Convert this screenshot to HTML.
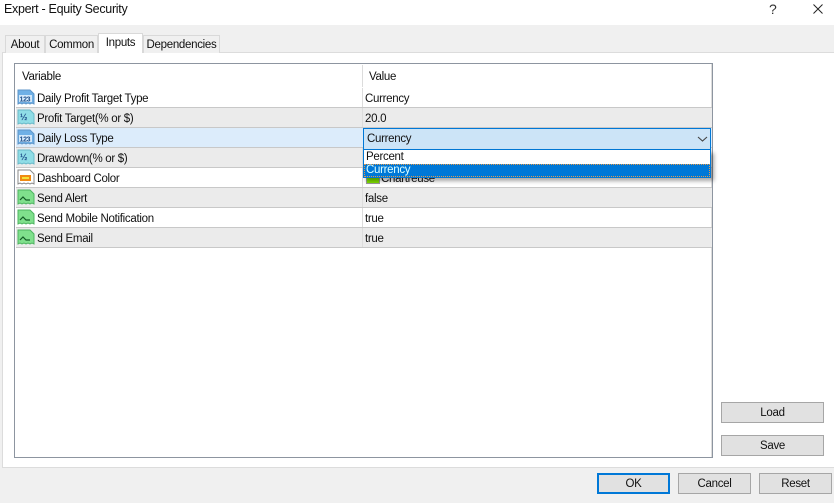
<!DOCTYPE html>
<html><head><meta charset="utf-8"><style>
html,body{margin:0;padding:0}
body{width:834px;height:503px;overflow:hidden;position:relative;background:#f0f0f0;font-family:"Liberation Sans",sans-serif;font-size:11.5px;letter-spacing:-.3px;color:#111}
div{position:absolute;box-sizing:border-box;white-space:nowrap}
.row{left:16px;width:696px;height:20px;border-bottom:1px solid #c8c8c8}
.t{top:4px;line-height:14px}
.v{left:349px}
.n{left:21px}
.g{background:#ebebeb}
.sep{left:346px;top:0;width:1px;height:19px;background:#dcdcdc}
.tab{top:35px;height:18px;background:#f0f0f0;border:1px solid #d9d9d9;border-bottom:none;text-align:center;line-height:18px}
.btn{background:#e1e1e1;border:1px solid #a6a6a6;text-align:center;line-height:21px}
svg{position:absolute;left:1px;top:1px}
</style></head><body>
<div style="left:0;top:0;width:834px;height:25px;background:#fff"></div>
<div style="left:4px;top:2px;font-size:12.5px;line-height:15px;letter-spacing:-.3px">Expert - Equity Security</div>
<div style="left:769px;top:0px;font-size:14px;line-height:18px;color:#333">?</div>
<svg style="left:813px;top:4px" width="10" height="10" viewBox="0 0 10 10"><path d="M.5.500l9 9M9.500.500l-9 9" stroke="#222" stroke-width="1" fill="none"/></svg>

<div style="left:2px;top:52px;width:832px;height:416px;background:#fff;border-left:1px solid #dcdcdc;border-top:1px solid #dcdcdc;border-bottom:1px solid #dcdcdc"></div>
<div class="tab" style="left:5px;width:40px">About</div>
<div class="tab" style="left:45px;width:53px">Common</div>
<div class="tab" style="left:98px;width:45px;top:33px;height:20px;background:#fff;line-height:18px;z-index:2">Inputs</div>
<div class="tab" style="left:143px;width:77px">Dependencies</div>

<div style="left:14px;top:63px;width:699px;height:395px;border:1px solid #8d95a0;background:#fff"></div>
<div style="left:711px;top:64px;width:1px;height:393px;background:#dcdcdc"></div>
<div class="sep" style="left:362px;top:65px;height:22px"></div>
<div style="left:22px;top:70px;line-height:14px">Variable</div>
<div style="left:369px;top:70px;line-height:14px">Value</div>

<div class="row" style="top:88px"><svg width="18" height="17" viewBox="0 0 18 17"><path d="M1 1h12l4 4v10l-2-1-2 1-2-1-2 1-2-1-2 1-2-1-2 1z" fill="#6fb0e6" stroke="#5f96c8"/><rect x="2" y="6" width="13" height="7" fill="#d3e8fa"/><text x="2.500" y="12.500" font-size="7" font-weight="bold" fill="#1f4f8a" font-family="Liberation Sans">123</text></svg><div class="t n">Daily Profit Target Type</div><div class="t v">Currency</div><div class="sep"></div></div>
<div class="row g" style="top:108px"><svg width="18" height="17" viewBox="0 0 18 17"><path d="M1 1h12l4 4v10l-2-1-2 1-2-1-2 1-2-1-2 1-2-1-2 1z" fill="#8fdde6" stroke="#69b9c8"/><text x="3" y="11" font-size="9" font-weight="bold" fill="#1f4f8a" font-family="Liberation Sans">½</text></svg><div class="t n">Profit Target(% or $)</div><div class="t v">20.0</div><div class="sep"></div></div>
<div class="row" style="top:128px;background:#dcecfb"><svg width="18" height="17" viewBox="0 0 18 17"><path d="M1 1h12l4 4v10l-2-1-2 1-2-1-2 1-2-1-2 1-2-1-2 1z" fill="#6fb0e6" stroke="#5f96c8"/><rect x="2" y="6" width="13" height="7" fill="#d3e8fa"/><text x="2.500" y="12.500" font-size="7" font-weight="bold" fill="#1f4f8a" font-family="Liberation Sans">123</text></svg><div class="t n">Daily Loss Type</div></div>
<div class="row g" style="top:148px"><svg width="18" height="17" viewBox="0 0 18 17"><path d="M1 1h12l4 4v10l-2-1-2 1-2-1-2 1-2-1-2 1-2-1-2 1z" fill="#8fdde6" stroke="#69b9c8"/><text x="3" y="11" font-size="9" font-weight="bold" fill="#1f4f8a" font-family="Liberation Sans">½</text></svg><div class="t n">Drawdown(% or $)</div><div class="sep"></div></div>
<div class="row" style="top:168px"><svg width="18" height="17" viewBox="0 0 18 17"><path d="M1 1h12l4 4v10l-2-1-2 1-2-1-2 1-2-1-2 1-2-1-2 1z" fill="#fff" stroke="#8a8a8a"/><rect x="3" y="6" width="11" height="6" fill="#f08a12"/><rect x="5" y="8" width="7" height="2" fill="#f4e23a"/></svg><div class="t n">Dashboard Color</div><div style="left:350px;top:3px;width:14px;height:13px;background:#7fe000;border:1px solid #999"></div><div class="t" style="left:365px">Chartreuse</div><div class="sep"></div></div>
<div class="row g" style="top:188px"><svg width="18" height="17" viewBox="0 0 18 17"><path d="M1 1h12l4 4v10l-2-1-2 1-2-1-2 1-2-1-2 1-2-1-2 1z" fill="#7fe08c" stroke="#4eb560"/><path d="M3 11l3-3 3 3h4" stroke="#135c25" fill="none" stroke-width="1.200"/></svg><div class="t n">Send Alert</div><div class="t v">false</div><div class="sep"></div></div>
<div class="row" style="top:208px"><svg width="18" height="17" viewBox="0 0 18 17"><path d="M1 1h12l4 4v10l-2-1-2 1-2-1-2 1-2-1-2 1-2-1-2 1z" fill="#7fe08c" stroke="#4eb560"/><path d="M3 11l3-3 3 3h4" stroke="#135c25" fill="none" stroke-width="1.200"/></svg><div class="t n">Send Mobile Notification</div><div class="t v">true</div><div class="sep"></div></div>
<div class="row g" style="top:228px"><svg width="18" height="17" viewBox="0 0 18 17"><path d="M1 1h12l4 4v10l-2-1-2 1-2-1-2 1-2-1-2 1-2-1-2 1z" fill="#7fe08c" stroke="#4eb560"/><path d="M3 11l3-3 3 3h4" stroke="#135c25" fill="none" stroke-width="1.200"/></svg><div class="t n">Send Email</div><div class="t v">true</div><div class="sep"></div></div>

<div style="left:363px;top:128px;width:348px;height:22px;background:#cce4f7;border:1px solid #0078d7;line-height:21px;padding-left:3px;z-index:3">Currency</div>
<svg style="left:697px;top:136px;z-index:4" width="11" height="7" viewBox="0 0 11 7"><path d="M1 1l4.500 4 4.500-4" stroke="#444" fill="none" stroke-width="1.100"/></svg>
<div style="left:363px;top:150px;width:348px;height:28px;background:#fff;border:1px solid #0078d7;border-top:none;box-shadow:3px 3px 4px rgba(0,0,0,.35);z-index:3"></div>
<div style="left:366px;top:150px;line-height:14px;z-index:4">Percent</div>
<div style="left:364px;top:164px;width:346px;height:13px;background:#0078d7;color:#dff;outline:1px dotted #e39a4a;outline-offset:-1px;line-height:13px;padding-left:2px;z-index:4">Currency</div>

<div class="btn" style="left:721px;top:402px;width:103px;height:21px">Load</div>
<div class="btn" style="left:721px;top:435px;width:103px;height:21px">Save</div>
<div class="btn" style="left:597px;top:473px;width:73px;height:21px;border:2px solid #0078d7;line-height:19px">OK</div>
<div class="btn" style="left:678px;top:473px;width:73px;height:21px">Cancel</div>
<div class="btn" style="left:759px;top:473px;width:73px;height:21px">Reset</div>
</body></html>
